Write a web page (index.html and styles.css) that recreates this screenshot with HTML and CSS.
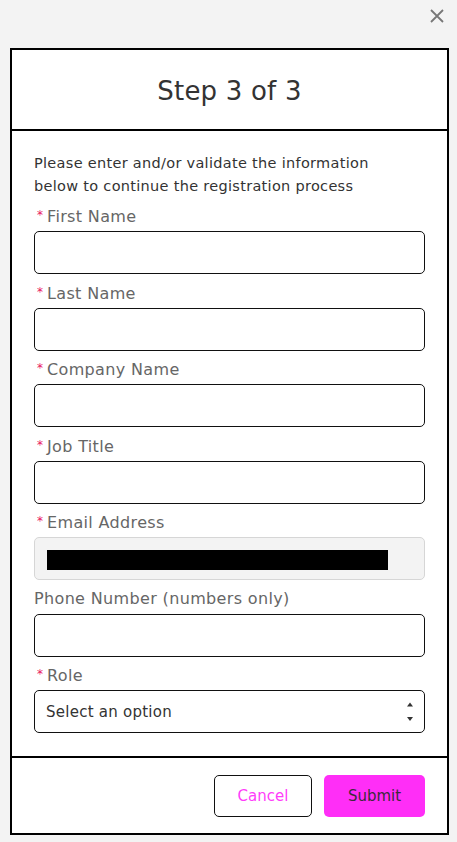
FILE: index.html
```html
<!DOCTYPE html>
<html lang="en">
<head>
<meta charset="utf-8">
<title>Step 3 of 3</title>
<link rel="stylesheet" href="styles.css">
</head>
<body>
<div class="page">
  <div class="topbar">
    <button class="close" aria-label="Close">
      <svg width="14" height="14" viewBox="0 0 14 14"><path d="M1 1 L13 13 M13 1 L1 13" stroke="#777" stroke-width="1.8" fill="none"/></svg>
    </button>
  </div>
  <div class="modal">
    <div class="modal-header"><h1 class="title">Step 3 of 3</h1></div>
    <div class="modal-body">
      <p class="intro">Please enter and/or validate the information below to continue the registration process</p>
      <div class="field">
        <label class="label"><span class="req">*</span>First Name</label>
        <div class="input"></div>
      </div>
      <div class="field">
        <label class="label"><span class="req">*</span>Last Name</label>
        <div class="input"></div>
      </div>
      <div class="field">
        <label class="label"><span class="req">*</span>Company Name</label>
        <div class="input"></div>
      </div>
      <div class="field">
        <label class="label"><span class="req">*</span>Job Title</label>
        <div class="input"></div>
      </div>
      <div class="field">
        <label class="label"><span class="req">*</span>Email Address</label>
        <div class="input disabled"><span class="redact"></span></div>
      </div>
      <div class="field">
        <label class="label">Phone Number (numbers only)</label>
        <div class="input"></div>
      </div>
      <div class="field">
        <label class="label"><span class="req">*</span>Role</label>
        <div class="input select">
          <span class="select-text">Select an option</span>
          <svg class="arrows" width="8" height="20" viewBox="0 0 8 20"><path d="M4 0.5 L7 4.5 L1 4.5 Z M1 15 L7 15 L4 19 Z" fill="#333"/></svg>
        </div>
      </div>
    </div>
    <div class="modal-footer">
      <button class="btn btn-cancel">Cancel</button>
      <button class="btn btn-submit">Submit</button>
    </div>
  </div>
</div>
</body>
</html>
```
FILE: styles.css
```css
* { box-sizing: border-box; }
html, body { margin: 0; padding: 0; }
body {
  background: #f3f3f3;
  font-family: "DejaVu Sans", "Open Sans", sans-serif;
  color: #333;
  width: 457px;
  height: 842px;
  overflow: hidden;
}
.page { padding: 0 8px 0 10px; }
.topbar {
  height: 48px;
  display: flex;
  justify-content: flex-end;
  align-items: flex-start;
  padding-top: 9px;
}
.close {
  background: none;
  border: 0;
  padding: 0;
  width: 14px;
  height: 14px;
  margin-right: 5px;
  cursor: pointer;
}
.close svg { display: block; }
.modal {
  width: 439px;
  background: #fff;
  border: 2px solid #000;
}
.modal-header {
  height: 81px;
  border-bottom: 2px solid #000;
  display: flex;
  align-items: center;
  justify-content: center;
}
.title {
  margin: 0;
  font-size: 26px;
  font-weight: 400;
  color: #333;
  padding-top: 2px;
  letter-spacing: 0.2px;
}
.modal-body {
  padding: 21px 22px 23px 22px;
}
.intro {
  margin: 0 0 8px 0;
  max-width: 360px;
  font-size: 14.5px;
  line-height: 23px;
  letter-spacing: 0.3px;
  color: #333;
}
.field { margin-top: 8.5px; }
.field:first-of-type { margin-top: 0; }
.label {
  display: block;
  font-size: 16px;
  letter-spacing: 0.35px;
  line-height: 19px;
  height: 20px;
  margin-bottom: 5px;
  color: #666;
}
.req {
  color: #e8145f;
  font-size: 12px;
  letter-spacing: 0;
  vertical-align: 3px;
  margin-left: 3px;
  margin-right: 4px;
}
.input {
  height: 43px;
  border: 1px solid #111;
  border-radius: 5px;
  background: #fff;
}
.input.disabled {
  background: #f3f3f3;
  border-color: #d6d6d6;
  padding: 12px 0 0 12px;
}
.redact {
  display: block;
  width: 341px;
  height: 20px;
  background: #000;
}
.select {
  display: flex;
  align-items: center;
  justify-content: space-between;
  padding: 0 10px 0 11px;
}
.select-text {
  font-size: 15px;
  letter-spacing: 0.25px;
  color: #333;
}
.arrows { display: block; }
.modal-footer {
  border-top: 2px solid #000;
  display: flex;
  justify-content: flex-end;
  gap: 12px;
  padding: 17px 22px 16px 0;
}
.btn {
  height: 42px;
  border-radius: 5px;
  font-family: inherit;
  font-size: 15px;
  cursor: pointer;
}
.btn-cancel {
  width: 98px;
  background: #fff;
  border: 1px solid #111;
  color: #ff3dfa;
}
.btn-submit {
  width: 101px;
  background: #ff2ef7;
  border: 0;
  color: #3a2a3a;
}
```
